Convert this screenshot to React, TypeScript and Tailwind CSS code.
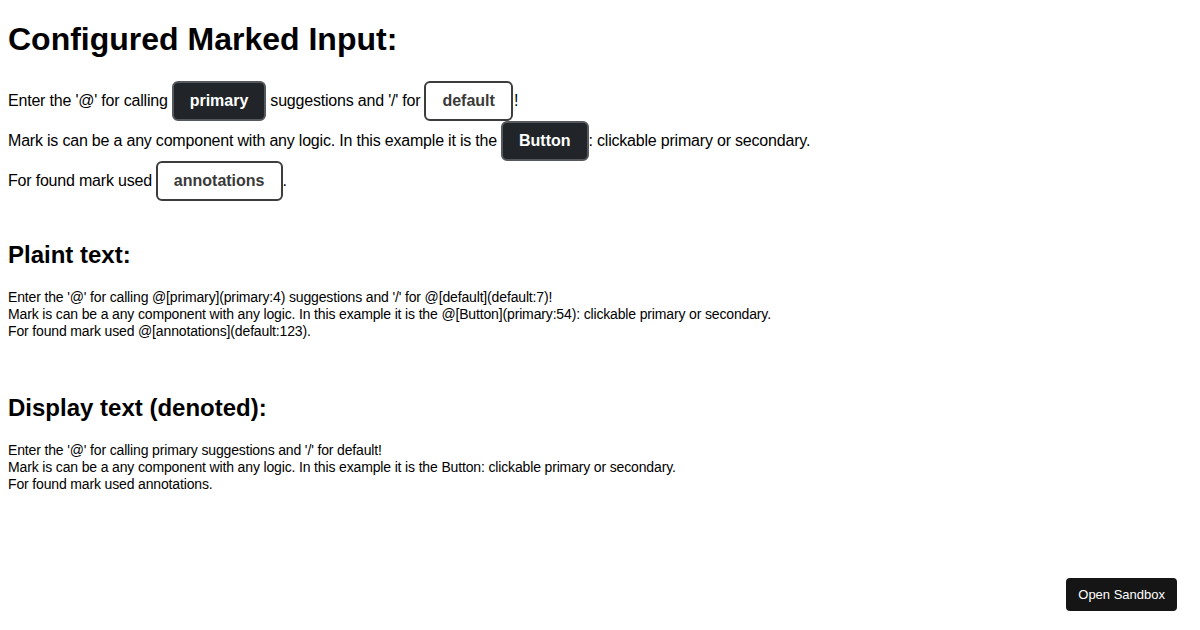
function Mark({ label, primary }: { label: string; primary?: boolean }) {
  return (
    <button
      className={
        primary
          ? "mx-[4px] inline-flex h-[40px] items-center rounded-[6px] border-2 border-[#55585c] bg-[#212529] px-[16px] align-middle text-[16px] font-bold tracking-normal text-white"
          : "mx-[4px] inline-flex h-[40px] items-center rounded-[6px] border-2 border-[#3d3d3d] bg-white px-[16px] align-middle text-[16px] font-bold tracking-normal text-[#3a3a3a]"
      }
    >
      {label}
    </button>
  );
}

export default function App() {
  return (
    <div className="min-h-[630px] bg-white px-[8px] font-['Liberation_Sans',Arial,sans-serif] text-black">
      <h1 className="pt-[21px] text-[32px] leading-[37px] font-bold">Configured Marked Input:</h1>

      <div className="mt-[23px] text-[16px] tracking-[-0.2px]">
        <div className="flex h-[40px] items-center">
          <span>Enter the '@' for calling</span>
          <Mark label="primary" primary />
          <span>suggestions and '/' for</span>
          <Mark label="default" />
          <span className="-ml-[3px]">!</span>
        </div>
        <div className="flex h-[40px] items-center">
          <span>Mark is can be a any component with any logic. In this example it is the</span>
          <Mark label="Button" primary />
          <span className="-ml-[4px]">: clickable primary or secondary.</span>
        </div>
        <div className="flex h-[40px] items-center">
          <span>For found mark used</span>
          <Mark label="annotations" />
          <span className="-ml-[4px]">.</span>
        </div>
      </div>

      <h2 className="mt-[40px] text-[24px] leading-[28px] font-bold">Plaint text:</h2>
      <div className="mt-[20px] text-[14px] leading-[17px] tracking-[-0.15px]">
        <div>Enter the '@' for calling @[primary](primary:4) suggestions and '/' for @[default](default:7)!</div>
        <div>Mark is can be a any component with any logic. In this example it is the @[Button](primary:54): clickable primary or secondary.</div>
        <div>For found mark used @[annotations](default:123).</div>
      </div>

      <h2 className="mt-[54px] text-[24px] leading-[28px] font-bold">Display text (denoted):</h2>
      <div className="mt-[20px] text-[14px] leading-[17px] tracking-[-0.15px]">
        <div>Enter the '@' for calling primary suggestions and '/' for default!</div>
        <div>Mark is can be a any component with any logic. In this example it is the Button: clickable primary or secondary.</div>
        <div>For found mark used annotations.</div>
      </div>

      <button className="fixed right-[23px] bottom-[19px] h-[33px] rounded-[4px] bg-[#151515] px-[12px] font-['Liberation_Sans',Arial,sans-serif] text-[13px] text-white">
        Open Sandbox
      </button>
    </div>
  );
}
